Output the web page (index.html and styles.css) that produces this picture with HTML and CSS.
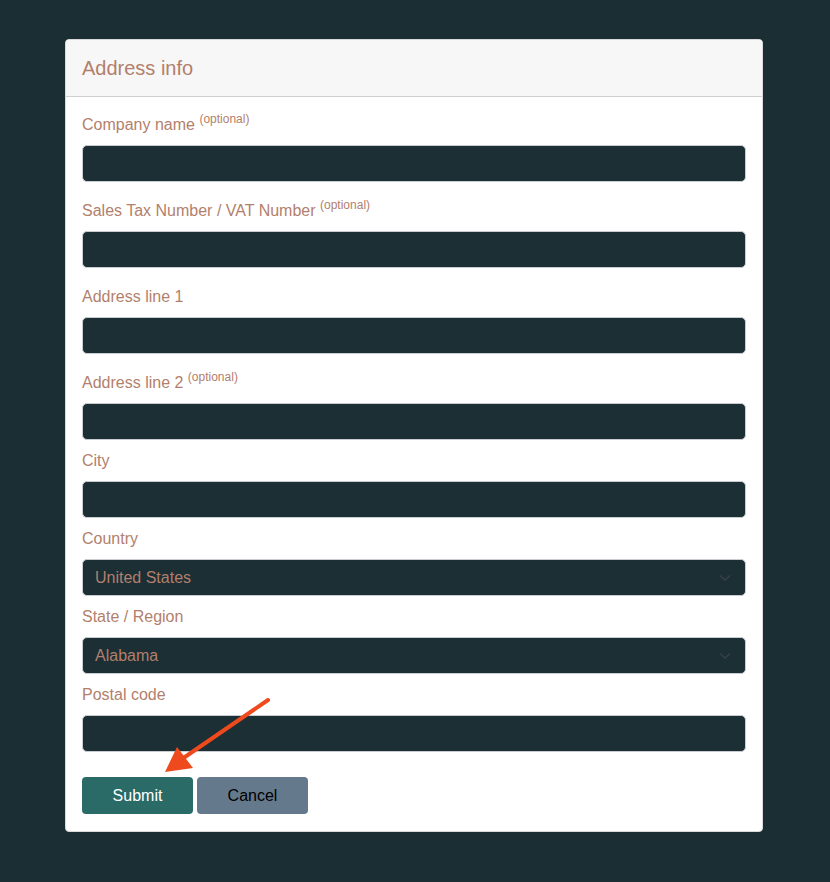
FILE: index.html
```html
<!DOCTYPE html>
<html>
<head>
<meta charset="utf-8">
<link rel="stylesheet" href="styles.css">
</head>
<body>
<div class="card">
  <div class="card-header">Address info</div>
  <form class="card-body">
    <div class="group wide">
      <label class="label">Company name <sup class="opt">(optional)</sup></label>
      <input class="field" type="text">
    </div>
    <div class="group wide">
      <label class="label">Sales Tax Number / VAT Number <sup class="opt">(optional)</sup></label>
      <input class="field" type="text">
    </div>
    <div class="group wide">
      <label class="label">Address line 1</label>
      <input class="field" type="text">
    </div>
    <div class="group">
      <label class="label">Address line 2 <sup class="opt">(optional)</sup></label>
      <input class="field" type="text">
    </div>
    <div class="group">
      <label class="label">City</label>
      <input class="field" type="text">
    </div>
    <div class="group">
      <label class="label">Country</label>
      <div class="select">
        <span>United States</span>
        <svg class="chev" width="12" height="8" viewBox="0 0 12 8"><path d="M1 1.5 L6 6 L11 1.5" fill="none" stroke="#3b4146" stroke-width="1.4"/></svg>
      </div>
    </div>
    <div class="group">
      <label class="label">State / Region</label>
      <div class="select">
        <span>Alabama</span>
        <svg class="chev" width="12" height="8" viewBox="0 0 12 8"><path d="M1 1.5 L6 6 L11 1.5" fill="none" stroke="#3b4146" stroke-width="1.4"/></svg>
      </div>
    </div>
    <div class="group last">
      <label class="label">Postal code</label>
      <input class="field" type="text">
    </div>
    <div class="actions">
      <button class="btn submit" type="button">Submit</button>
      <button class="btn cancel" type="button">Cancel</button>
    </div>
  </form>
</div>
<svg class="arrow" width="830" height="882" viewBox="0 0 830 882">
  <line x1="268" y1="700" x2="182" y2="759" stroke="#ee4a1d" stroke-width="4" stroke-linecap="round"/>
  <polygon points="165,772 177,747 193,768" fill="#ee4a1d"/>
</svg>
</body>
</html>
```

FILE: styles.css
```css
html, body {
  margin: 0;
  padding: 0;
}
body {
  background: #1a2e33;
  font-family: "Liberation Sans", Arial, sans-serif;
  width: 830px;
  height: 882px;
  position: relative;
  overflow: hidden;
}
.card {
  margin: 39px 0 0 65px;
  width: 698px;
  box-sizing: border-box;
  background: #ffffff;
  border: 1px solid #d9d9d9;
  border-radius: 4px;
  overflow: hidden;
}
.card-header {
  height: 56px;
  line-height: 56px;
  padding: 0 16px;
  background: #f7f7f7;
  border-bottom: 1px solid #cfcfcf;
  color: #b27f6c;
  font-size: 20px;
}
.card-body {
  margin: 0;
  padding: 17px 16px 17px;
  display: flex;
  flex-direction: column;
}
.group {
  display: flex;
  flex-direction: column;
  margin-bottom: 10px;
}
.group.wide {
  margin-bottom: 18px;
}
.group.last {
  margin-bottom: 25px;
}
.label {
  display: block;
  color: #b27f6c;
  font-size: 16px;
  line-height: 22px;
  height: 22px;
  margin-bottom: 9px;
}
.opt {
  font-size: 12px;
  vertical-align: baseline;
  position: relative;
  top: -7px;
  line-height: 0;
}
.field {
  display: block;
  box-sizing: border-box;
  width: 100%;
  height: 37px;
  margin: 0;
  background: #1b2f34;
  border: 1px solid #c9cdd1;
  border-radius: 5px;
  outline: none;
}
.select {
  box-sizing: border-box;
  height: 37px;
  background: #1b2f34;
  border: 1px solid #c9cdd1;
  border-radius: 5px;
  display: flex;
  align-items: center;
  justify-content: space-between;
  padding: 0 14px 0 12px;
  color: #b27f6c;
  font-size: 16px;
}
.chev {
  display: block;
}
.actions {
  display: flex;
  gap: 4px;
}
.btn {
  width: 111px;
  height: 37px;
  border: none;
  border-radius: 4px;
  font-family: "Liberation Sans", Arial, sans-serif;
  font-size: 16px;
  padding: 0;
  cursor: pointer;
}
.submit {
  background: #2a6b68;
  color: #ffffff;
}
.cancel {
  background: #65798c;
  color: #000000;
}
.arrow {
  position: absolute;
  left: 0;
  top: 0;
  pointer-events: none;
}
```
